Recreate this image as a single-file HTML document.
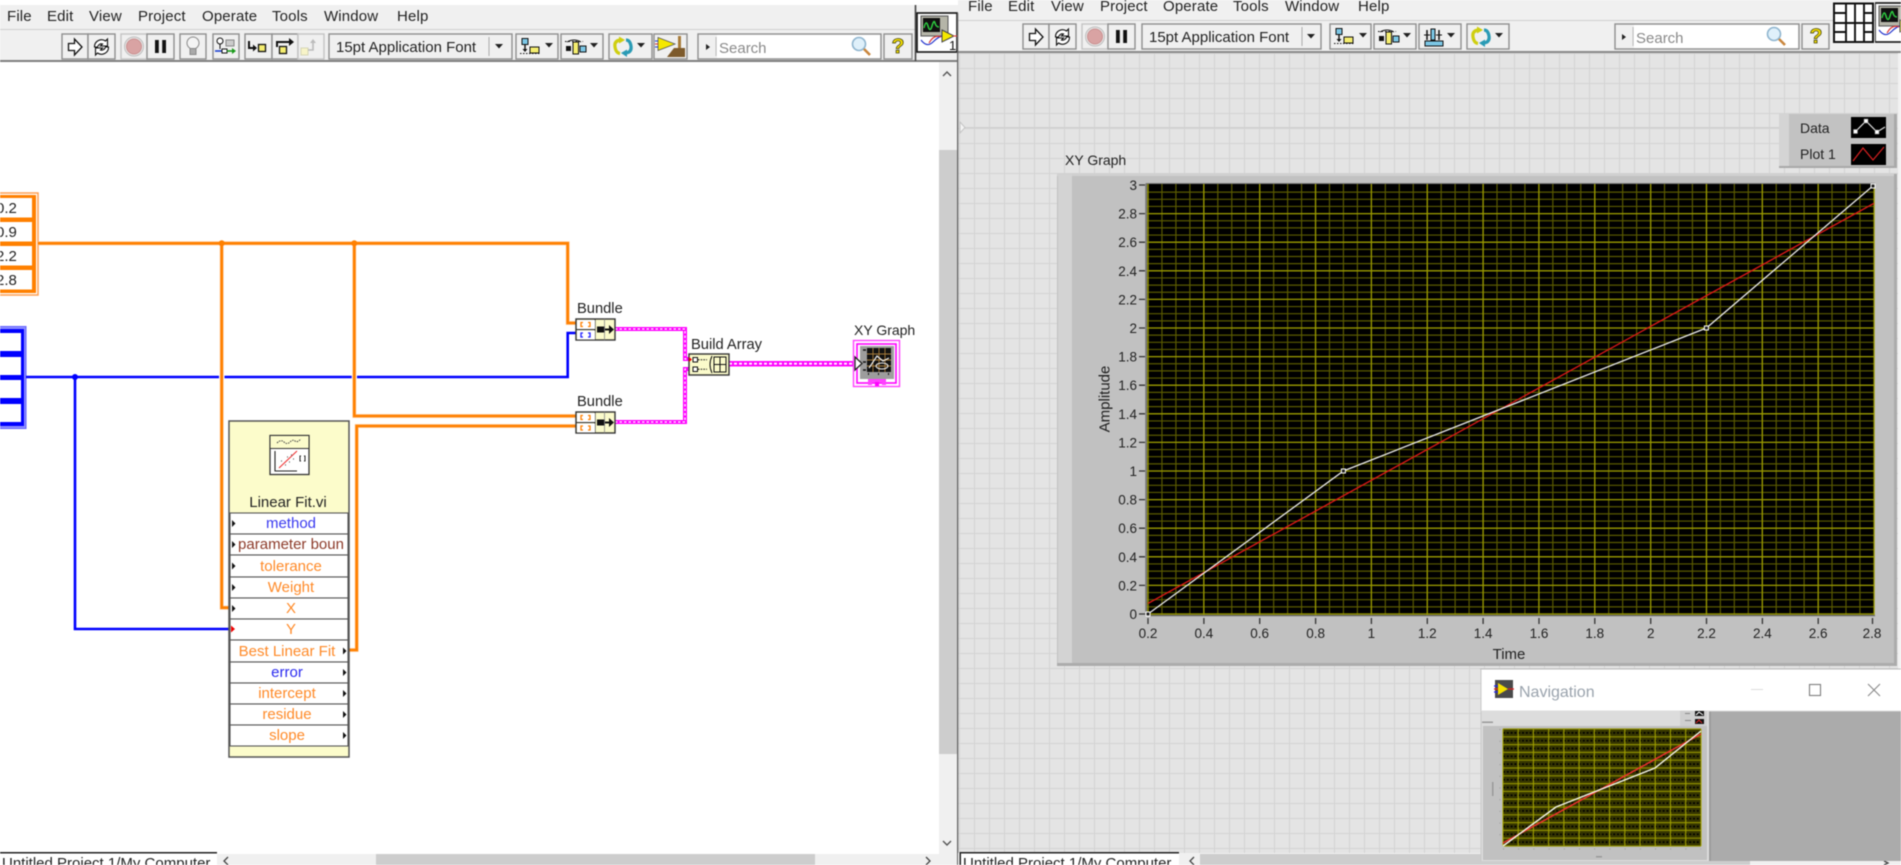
<!DOCTYPE html>
<html lang="en"><head><meta charset="utf-8"><title>LabVIEW Linear Fit</title>
<style>
html,body{margin:0;padding:0;width:1901px;height:865px;overflow:hidden;background:#fff}
svg{display:block;filter:blur(.4px)}
text{font-family:"Liberation Sans",sans-serif;fill:#222;font-size:15px}
.m{font-size:15px;letter-spacing:.15px}
.l{font-size:14.7px}
.a{font-size:13.5px;text-anchor:end}
.x{font-size:13.5px;text-anchor:middle}
.r{font-size:15px;text-anchor:middle}
.b{fill:#f0f0f0;stroke:#8f8f8f;stroke-width:1.4}
.d{fill:#f0f0f0;stroke:#c4c4c4;stroke-width:1.4}
</style></head><body>
<svg width="1901" height="865" viewBox="0 0 1901 865" xmlns="http://www.w3.org/2000/svg">
<defs>
<pattern id="fp" x="14" y="8" width="15" height="15" patternUnits="userSpaceOnUse"><rect width="15" height="15" fill="#e4e4e4"/><path d="M.5 0v15M0 .5h15" stroke="#d3d3d3" stroke-width="1"/></pattern>
<clipPath id="c1"><rect x="1875" y="0" width="26" height="50"/></clipPath>
<clipPath id="c2"><rect x="0" y="190" width="40" height="110"/></clipPath>
<g id="run"><path d="M6.5 9.5h6V5l7.5 8-7.5 8v-4.5h-6z" fill="#fff" stroke="#111" stroke-width="1.3"/></g>
<g id="cont"><g fill="#fff" stroke="#111" stroke-width="1.1"><path d="M6 13a7 7 0 0 1 11-6l2-2v7h-7l2-2a4 4 0 0 0-5 3z"/><path d="M20 13a7 7 0 0 1-11 6l-2 2v-7h7l-2 2a4 4 0 0 0 5-3z"/></g></g>
<g id="abort"><circle cx="13" cy="12.5" r="9.5" fill="#e8e8e8" stroke="#bdbdbd"/><circle cx="13" cy="12.5" r="7.5" fill="#d9a3a3" stroke="#c99090"/></g>
<g id="pause"><path d="M8 6h3.8v13H8zM15.2 6h3.8v13h-3.8z" fill="#111"/></g>
<g id="al"><rect x="6" y="4.5" width="6" height="6" fill="#7cc7e6" stroke="#111"/><path d="M9 10.5v6" stroke="#111" stroke-width="1.4"/><path d="M6.500 15l2.500 3 2.500-3z" fill="#111"/><path d="M4 19.500h20" stroke="#111" stroke-dasharray="1.500 1.500"/><rect x="14" y="13" width="9" height="6" fill="#f5ee70" stroke="#111"/><path d="M29 9h8l-4 4.500z" fill="#222"/></g>
<g id="di"><path d="M6 8q7-4 14 0" fill="none" stroke="#111"/><path d="M4 7.500h18" stroke="#111" stroke-dasharray="1.500 2"/><rect x="5" y="12" width="5" height="5" fill="#111"/><rect x="12" y="8" width="5.500" height="12" fill="#f5ee70" stroke="#111"/><rect x="19" y="12" width="6" height="6" fill="#7cc7e6" stroke="#111"/><path d="M29 9h8l-4 4.500z" fill="#222"/></g>
<g id="re"><path d="M11 6Q5 7 6 13t5 6.500" fill="none" stroke="#cfcf10" stroke-width="3.200"/><path d="M10 2.500l6 3.500-6 3.500z" fill="#cfcf10"/><path d="M17 19q6-1 5-7t-5-6" fill="none" stroke="#2a9bb5" stroke-width="3.200"/><path d="M18 23l-6-4 6-3.500z" fill="#2a9bb5"/><path d="M28 9h8l-4 4.500z" fill="#222"/></g>
<g id="vi"><rect x="0" y="0" width="40" height="39" fill="#fff" stroke="#111" stroke-width="1.600"/><rect x="4" y="3" width="27" height="20" fill="#b5b5a8" stroke="#555"/><rect x="6" y="5" width="17" height="14" fill="#111"/><path d="M7 15q2-9 4-2t4 0 3-3 4 4" fill="none" stroke="#2ecc40" stroke-width="1.500"/><path d="M4 27q6 8 12 2t10-6" fill="none" stroke="#2233cc" stroke-width="1.200"/><path d="M12 30q5-9 12-6" fill="none" stroke="#d33" stroke-width="1.200"/><path d="M25 17l12 6-12 6z" fill="#f5e800" stroke="#444"/><path d="M36 23h4" stroke="#d33"/></g>
<g id="q"><text x="14" y="19" style="font-size:21px;font-weight:bold;fill:#f2dc00;stroke:#4a4a10;stroke-width:.8" text-anchor="middle">?</text></g>
<g id="mag"><circle cx="-1" cy="-2" r="6.500" fill="#dff0fa" stroke="#8fb5cf" stroke-width="1.600"/><path d="M4 3l6 6" stroke="#c9863d" stroke-width="2.600"/></g>
<g id="tr"><path d="M0-3.500l3.500 3.500-3.500 3.500z" fill="#111"/></g>
</defs>

<!-- ============= LEFT WINDOW ============= -->
<rect width="958" height="865" fill="#fff"/>
<rect y="5" width="958" height="56" fill="#f0f0f0"/>
<rect y="29" width="915" height="1" fill="#cfcfcf"/>
<rect y="60" width="958" height="2" fill="#7f7f7f"/>
<text class="m" x="7" y="21">File</text><text class="m" x="47" y="21">Edit</text><text class="m" x="89" y="21">View</text><text class="m" x="138" y="21">Project</text><text class="m" x="202" y="21">Operate</text><text class="m" x="272" y="21">Tools</text><text class="m" x="324" y="21">Window</text><text class="m" x="397" y="21">Help</text>
<!-- left toolbar -->
<rect class="b" x="62" y="34" width="26" height="25"/><rect class="b" x="88" y="34" width="27" height="25"/>
<use href="#run" x="62" y="34"/><use href="#cont" x="88.500" y="34"/>
<rect class="d" x="121" y="34" width="26" height="25"/><rect class="b" x="147" y="34" width="27" height="25"/>
<use href="#abort" x="121" y="34"/><use href="#pause" x="147" y="34"/>
<rect class="b" x="180" y="34" width="26" height="25"/>
<g fill="#f4f4f4" stroke="#8a8a8a"><circle cx="193" cy="43" r="6"/><path d="M190 48.500h6v6h-6z" fill="#aaa"/></g>
<rect class="b" x="213" y="34" width="26" height="25"/>
<circle cx="220" cy="41" r="3" fill="#fff" stroke="#111"/><path d="M220 44v5" stroke="#111"/><rect x="226" y="40" width="8" height="6" fill="#ccc" stroke="#888"/><path d="M215 51h7" stroke="#1b3fd0" stroke-width="1.600"/><rect x="222" y="49" width="5" height="4" fill="#fff" stroke="#111"/><path d="M227 51h5" stroke="#1a9a1a" stroke-width="1.600"/><path d="M232 48l4 3-4 3z" fill="#1a9a1a"/>
<rect class="b" x="245" y="34" width="27" height="25"/><rect class="b" x="272" y="34" width="26" height="25"/><rect class="d" x="298" y="34" width="26" height="25"/>
<path d="M249 41v7h5" fill="none" stroke="#111" stroke-width="2"/><path d="M253 44.500l4 3.500-4 3.500z" fill="#111"/><rect x="258.500" y="44.500" width="7" height="7" fill="#f5ee70" stroke="#111" stroke-width="1.300"/>
<path d="M277 47v-5h13" fill="none" stroke="#111" stroke-width="2"/><path d="M289 38l5 4-5 4z" fill="#111"/><rect x="279.500" y="46.500" width="7" height="7" fill="#f5ee70" stroke="#111" stroke-width="1.300"/>
<rect x="301" y="48" width="7" height="7" fill="#f7f4c8" stroke="#d5d5b5"/><path d="M308 50h5v-8" fill="none" stroke="#bbb" stroke-width="1.600"/><path d="M310 43l3-4 3 4z" fill="#bbb"/>
<rect class="b" x="329" y="34" width="183" height="25"/><path d="M489 37v19" stroke="#aaa"/><path d="M495 44h8l-4 4.500z" fill="#222"/>
<text x="336" y="52">15pt Application Font</text>
<rect class="b" x="516" y="34" width="42" height="25"/><use href="#al" x="516" y="34"/>
<rect class="b" x="561" y="34" width="42" height="25"/><use href="#di" x="561" y="34"/>
<rect class="b" x="609" y="34" width="43" height="25"/><use href="#re" x="609" y="34"/>
<rect class="b" x="654" y="34" width="33" height="25"/>
<path d="M658 37.500l17 6.500-17 6.500z" fill="#f5e800" stroke="#555" stroke-width=".8"/><path d="M655 41h3M655 47h3" stroke="#1b3fd0"/><path d="M655 44h3" stroke="#d33"/><path d="M679.500 36v12" stroke="#a87b3a" stroke-width="3"/><path d="M667 57l7-9h11v9z" fill="#7d5a2b"/>
<rect class="b" x="698" y="34" width="183" height="25"/><rect x="717" y="35" width="163" height="23" fill="#fff"/><path d="M706 44l4 3-4 3z" fill="#222"/><path d="M716 37v19" stroke="#bbb"/>
<text x="719" y="53" style="fill:#8a8a8a;font-size:15px">Search</text><use href="#mag" x="860" y="46"/>
<rect class="b" x="884" y="34" width="28" height="25"/><use href="#q" x="884" y="34"/>
<!-- left VI icon -->
<path d="M915.500 5v56" stroke="#444" stroke-width="1.600"/>
<use href="#vi" x="917" y="13"/><text x="949" y="50" style="font-size:13px;fill:#111">1</text>

<!-- left scrollbars -->
<rect x="939" y="62" width="18" height="792" fill="#f0f0f0"/>
<rect x="939" y="150" width="18" height="604" fill="#cdcdcd"/>
<path d="M943 76l4-4 4 4M943 841l4 4 4-4" fill="none" stroke="#555" stroke-width="1.400"/>
<rect x="0" y="854" width="958" height="11" fill="#f0f0f0"/>
<rect x="376" y="854" width="439" height="11" fill="#cdcdcd"/>
<rect x="0" y="852" width="217" height="1.500" fill="#222"/>
<rect x="0" y="853.500" width="217" height="11.500" fill="#fff"/>
<text x="2" y="868" style="font-size:15px">Untitled Project 1/My Computer</text>
<path d="M228 857l-4 4 4 4M926 857l4 4-4 4" fill="none" stroke="#444" stroke-width="1.300"/>

<!-- block diagram: numeric arrays -->
<g clip-path="url(#c2)">
<rect x="-8" y="193" width="46" height="102" fill="#fff" stroke="#ff9f50" stroke-width="1.500"/>
<rect x="-8" y="195" width="44" height="98" fill="#ff8000"/>
<rect x="-4" y="198" width="36" height="19.500" fill="#fff"/><rect x="-4" y="222" width="36" height="19.500" fill="#fff"/><rect x="-4" y="246" width="36" height="19.500" fill="#fff"/><rect x="-4" y="270" width="36" height="19.500" fill="#fff"/>
<text x="-4" y="213">0.2</text><text x="-4" y="237">0.9</text><text x="-4" y="261">2.2</text><text x="-4" y="285">2.8</text>
</g>
<rect x="-8" y="326.500" width="34" height="102" fill="#8f8fff" stroke="#6060ff"/>
<rect x="-8" y="329" width="32" height="97" fill="#0000ff"/>
<rect x="-4" y="333" width="25" height="18" fill="#fff"/><rect x="-4" y="357" width="25" height="18" fill="#fff"/><rect x="-4" y="380" width="25" height="18" fill="#fff"/><rect x="-4" y="404" width="25" height="18" fill="#fff"/>

<!-- wires blue -->
<g fill="none" stroke="#0000ff" stroke-width="2.600">
<path d="M26 377H219M224.500 377H351.700M357 377H567.700V333H576"/>
<path d="M75 377V629H230"/>
</g>
<circle cx="75" cy="377" r="3" fill="#0000ff"/>
<!-- wires orange -->
<g fill="none" stroke="#ffc28a" stroke-width="3.800"><path d="M38 243.300H567.700V323H576M221.700 243V607.700H230M354.300 243V416H576M348 650H356.700V426H576"/></g>
<g fill="none" stroke="#ff8000" stroke-width="2.600"><path d="M38 243.300H567.700V323H576M221.700 243V607.700H230M354.300 243V416H576M348 650H356.700V426H576"/></g>
<circle cx="221.700" cy="243.300" r="3" fill="#ff8000"/><circle cx="354.300" cy="243.300" r="3" fill="#ff8000"/>

<!-- cluster wires -->
<g fill="none" stroke="#ff00ff" stroke-width="4"><path d="M615 329H685V359H690M615 422H685V369H690"/></g>
<g fill="none" stroke="#fff" stroke-width="1.300" stroke-dasharray="2.500 2"><path d="M615 329H685V359H690M615 422H685V369H690"/></g>
<path d="M729 363.700H855" stroke="#ff00ff" stroke-width="5.500"/>
<path d="M729 363.700H855" stroke="#fff" stroke-width="1.800" stroke-dasharray="3 2"/>

<!-- bundles -->
<rect x="576" y="319" width="39" height="21" fill="#fbfbcb" stroke="#333" stroke-width="1.400"/>
<path d="M595 319v21M576 329.500h19" stroke="#333" stroke-width="1.200"/>
<rect x="577" y="320" width="18" height="9" fill="#fff"/><rect x="577" y="330.500" width="18" height="9" fill="#fff"/>
<rect x="597" y="326.500" width="8" height="6" fill="#111"/><path d="M603 329.500h8" stroke="#111" stroke-width="2"/><path d="M609 325l5 4.500-5 4.500z" fill="#111"/><path d="M604.500 319v21" stroke="#888" stroke-width=".8"/>
<g fill="none" stroke="#ff8000" stroke-width="1.300"><path d="M583 322.500h-2v4h2M588 322.500h2v4h-2"/></g>
<g fill="none" stroke="#2020ff" stroke-width="1.300"><path d="M583 333h-2v4h2M588 333h2v4h-2"/></g>
<rect x="576" y="412" width="39" height="21" fill="#fbfbcb" stroke="#333" stroke-width="1.400"/>
<path d="M595 412v21M576 422.500h19" stroke="#333" stroke-width="1.200"/>
<rect x="577" y="413" width="18" height="9" fill="#fff"/><rect x="577" y="423.500" width="18" height="9" fill="#fff"/>
<rect x="597" y="419.500" width="8" height="6" fill="#111"/><path d="M603 422.500h8" stroke="#111" stroke-width="2"/><path d="M609 418l5 4.500-5 4.500z" fill="#111"/><path d="M604.500 412v21" stroke="#888" stroke-width=".8"/>
<g fill="none" stroke="#ff8000" stroke-width="1.300"><path d="M583 415.500h-2v4h2M588 415.500h2v4h-2M583 426h-2v4h2M588 426h2v4h-2"/></g>
<text class="l" x="577" y="313">Bundle</text>
<text class="l" x="577" y="406">Bundle</text>

<!-- build array -->
<rect x="689" y="354" width="40" height="21" fill="#fbfbcb" stroke="#333" stroke-width="1.400"/>
<rect x="693" y="357.500" width="4.500" height="4.500" fill="#fff" stroke="#111"/><rect x="693" y="367" width="4.500" height="4.500" fill="#fff" stroke="#111"/>
<path d="M698 359.700h9M698 369.200h9" stroke="#111" stroke-dasharray="1.500 1.200"/>
<path d="M712 356q-4 8.500 0 17" fill="none" stroke="#111"/><rect x="714" y="357" width="12" height="15" fill="#fbfbcb" stroke="#111"/><path d="M720 357v15M714 364.500h12" stroke="#111"/>
<path d="M689 357l3 2.500-3 2.500z" fill="#e00"/>
<text class="l" x="691" y="349">Build Array</text>

<!-- XY Graph terminal -->
<rect x="853.500" y="340.500" width="46" height="46" fill="#fff" stroke="#ff40ff" stroke-width="1.400"/>
<rect x="857" y="344" width="39" height="39" fill="#fff" stroke="#ff00ff" stroke-width="1.600"/>
<rect x="860" y="346" width="34" height="33" fill="#9d9d9d"/>
<rect x="867" y="348" width="24" height="24" fill="#111"/>
<path d="M867 354h24M867 360h24M867 366h24M873 348v24M879 348v24M885 348v24" stroke="#a87d3a" stroke-width=".9"/>
<path d="M869 368l8-12 6 5 6-3" fill="none" stroke="#eee" stroke-width="1.200"/><ellipse cx="882" cy="366" rx="6" ry="3" fill="none" stroke="#eee"/>
<path d="M866 350h-3M866 362h-3M866 370h-3" stroke="#111" stroke-width="1.500"/><path d="M868 374h1M878 374h1M888 374h1" stroke="#111" stroke-width="2"/>
<path d="M855 357l7 6.500-7 6.500z" fill="#fff" stroke="#222" stroke-width="1.300"/>
<path d="M868 379h18v6h-4v-3h-10v3h-4z" fill="#ff40ff"/>
<rect x="875" y="382" width="4" height="4" fill="#ff00ff"/>
<text style="font-size:14px" x="854" y="335">XY Graph</text>

<!-- Linear Fit subVI -->
<rect x="229" y="421" width="120" height="336" fill="#fcfccb" stroke="#555" stroke-width="1.500"/>
<rect x="270" y="435.500" width="39" height="39" fill="#fff" stroke="#333" stroke-width="1.300"/>
<rect x="270.500" y="436" width="38" height="12" fill="#fcfccb"/><path d="M270 448.500h39" stroke="#333"/>
<path d="M277 443q4-4 7-1t6 0 5-1 6-2" fill="none" stroke="#444" stroke-width="1" stroke-dasharray="1.500 1"/>
<path d="M275 451v20h22" fill="none" stroke="#222" stroke-width="1.100"/><path d="M279 468l18-17" stroke="#e33" stroke-width="1.100"/>
<path d="M281 461h1M285 465h1M287 457h1M291 455h1M293 459h1M289 462h1" stroke="#666" stroke-width="1.300"/>
<path d="M301 456h-1v5h1M304 456h1v5h-1" fill="none" stroke="#222"/>
<text class="r" x="288" y="507">Linear Fit.vi</text>
<g fill="#fff" stroke="#555" stroke-width="1.100">
<rect x="230" y="513" width="118" height="21"/><rect x="230" y="534" width="118" height="21"/><rect x="230" y="555" width="118" height="22"/><rect x="230" y="577" width="118" height="21"/><rect x="230" y="598" width="118" height="21"/><rect x="230" y="619" width="118" height="21"/><rect x="230" y="640" width="118" height="22"/><rect x="230" y="662" width="118" height="21"/><rect x="230" y="683" width="118" height="21"/><rect x="230" y="704" width="118" height="21"/><rect x="230" y="725" width="118" height="21"/>
</g>
<text class="r" x="291" y="528" style="fill:#3a3af0">method</text>
<text class="r" x="291" y="549" style="fill:#8d3b2a">parameter boun</text>
<text class="r" x="291" y="571" style="fill:#ff8a28">tolerance</text>
<text class="r" x="291" y="592" style="fill:#ff8a28">Weight</text>
<text class="r" x="291" y="613" style="fill:#ff8a28">X</text>
<text class="r" x="291" y="634" style="fill:#ff8a28">Y</text>
<text class="r" x="287" y="656" style="fill:#ff8a28">Best Linear Fit</text>
<text class="r" x="287" y="677" style="fill:#2a2af0">error</text>
<text class="r" x="287" y="698" style="fill:#ff8a28">intercept</text>
<text class="r" x="287" y="719" style="fill:#ff8a28">residue</text>
<text class="r" x="287" y="740" style="fill:#ff8a28">slope</text>
<use href="#tr" x="232" y="523.500"/><use href="#tr" x="232" y="544.500"/><use href="#tr" x="232" y="566"/><use href="#tr" x="232" y="587.500"/><use href="#tr" x="232" y="608.500"/>
<path d="M231 625.500l4 3.500-4 3.500z" fill="#e00"/>
<use href="#tr" x="343" y="651"/><use href="#tr" x="343" y="672.500"/><use href="#tr" x="343" y="693.500"/><use href="#tr" x="343" y="714.500"/><use href="#tr" x="343" y="735.500"/>

<!-- ============= RIGHT WINDOW ============= -->
<rect x="958" y="0" width="943" height="53" fill="#f0f0f0"/>
<rect x="958" y="20" width="943" height="1" fill="#d0d0d0"/>
<rect x="958" y="51" width="943" height="2" fill="#8a8a8a"/>
<rect x="958" y="53" width="943" height="800" fill="url(#fp)"/>
<rect x="957" y="13" width="1.300" height="852" fill="#666"/>
<rect x="1898" y="53" width="3" height="800" fill="#f2f2f2"/>
<text class="m" x="968" y="11">File</text><text class="m" x="1008" y="11">Edit</text><text class="m" x="1051" y="11">View</text><text class="m" x="1100" y="11">Project</text><text class="m" x="1163" y="11">Operate</text><text class="m" x="1233" y="11">Tools</text><text class="m" x="1285" y="11">Window</text><text class="m" x="1358" y="11">Help</text>
<rect class="b" x="1023" y="24" width="26" height="25"/><rect class="b" x="1049" y="24" width="27" height="25"/>
<use href="#run" x="1023" y="24"/><use href="#cont" x="1049.500" y="24"/>
<rect class="d" x="1082" y="24" width="26" height="25"/><rect class="b" x="1108" y="24" width="27" height="25"/>
<use href="#abort" x="1082" y="24"/><use href="#pause" x="1108" y="24"/>
<rect class="b" x="1142" y="24" width="179" height="25"/><path d="M1302 27v19" stroke="#aaa"/><path d="M1307 34h8l-4 4.500z" fill="#222"/>
<text x="1149" y="42">15pt Application Font</text>
<rect class="b" x="1330" y="24" width="41" height="25"/><use href="#al" x="1330" y="24"/>
<rect class="b" x="1374" y="24" width="42" height="25"/><use href="#di" x="1374" y="24"/>
<rect class="b" x="1419" y="24" width="42" height="25"/>
<path d="M1427 30v10M1439 30v10" stroke="#111" stroke-width="1.500"/><path d="M1424 35h6M1442 35h-6" stroke="#111"/><rect x="1431" y="29" width="4" height="11" fill="#7cc7e6" stroke="#111"/><rect x="1425" y="41" width="18" height="5" fill="#7cc7e6" stroke="#111"/><path d="M1447 33h8l-4 4.500z" fill="#222"/>
<rect class="b" x="1467" y="24" width="42" height="25"/><use href="#re" x="1467" y="24"/>
<rect class="b" x="1615" y="24" width="184" height="25"/><rect x="1634" y="25" width="164" height="23" fill="#fff"/><path d="M1622 34l4 3-4 3z" fill="#222"/><path d="M1633 27v19" stroke="#bbb"/>
<text x="1636" y="43" style="fill:#8a8a8a;font-size:15px">Search</text><use href="#mag" x="1775" y="36"/>
<rect class="b" x="1802" y="24" width="27" height="25"/><use href="#q" x="1802" y="24"/>
<!-- connector pane -->
<rect x="1834" y="3.500" width="39" height="38.500" fill="#fff" stroke="#111" stroke-width="2"/>
<path d="M1846 3v39M1855 3v39M1864 3v39M1834 13h12M1834 23h39M1834 32h12M1864 13h9M1864 32h9" stroke="#111" stroke-width="1.900" fill="none"/>
<g clip-path="url(#c1)"><use href="#vi" x="1875" y="3"/></g>

<!-- splitter -->
<path d="M962 127.500H1779" stroke="#cfcfcf" stroke-width="1"/><path d="M960 122l5 5.500-5 5.500z" fill="#f4f4f4" stroke="#c4c4c4"/>

<!-- legend -->
<rect x="1779" y="114" width="118" height="54" fill="#c2c2c2"/><rect x="1779" y="114" width="10" height="54" fill="#d4d4d4"/><rect x="1779" y="166" width="118" height="2" fill="#a8a8a8"/><rect x="1894" y="114" width="3" height="54" fill="#a9a9a9"/>
<text x="1800" y="133" style="font-size:14px">Data</text><text x="1800" y="159" style="font-size:14px">Plot 1</text>
<rect x="1851" y="117" width="35" height="21" fill="#000"/><rect x="1851" y="144" width="35" height="21" fill="#000"/>
<path d="M1855 132l11-11 11 11 8-5" fill="none" stroke="#ddd" stroke-width="1.200"/><rect x="1853.500" y="129.500" width="4" height="4" fill="#fff" stroke="#888" stroke-width=".5"/><rect x="1864" y="119" width="4" height="4" fill="#fff" stroke="#888" stroke-width=".5"/><rect x="1875" y="130" width="4" height="4" fill="#fff" stroke="#888" stroke-width=".5"/>
<path d="M1853 161l10-13 10 12 11-13" fill="none" stroke="#d82020" stroke-width="1.200"/>

<!-- XY graph -->
<text x="1065" y="165" style="font-size:14px">XY Graph</text>
<rect x="1057" y="173" width="840" height="493" fill="#c1c1c1"/>
<rect x="1057" y="173" width="840" height="3" fill="#d0d0d0"/>
<rect x="1058" y="174" width="14" height="491" fill="#d3d3d3"/>
<rect x="1057" y="663" width="840" height="3" fill="#acacac"/><rect x="1894" y="174" width="3" height="492" fill="#ababab"/>
<rect x="1147" y="184" width="727" height="431" fill="#000"/>
<path d="M1146 183.500V615.500H1875" fill="none" stroke="#6e6e6e" stroke-width="1.400"/><path d="M1146 183.500H1875" stroke="#7a7a7a"/>
<!-- grid minor -->
<path stroke="#5a5a00" stroke-width="1.200" fill="none" d="M1148 184v431m13.960-431v431m13.960-431v431m13.960-431v431m13.960-431v431m13.960-431v431m13.960-431v431m13.960-431v431m13.960-431v431m13.960-431v431m13.960-431v431m13.960-431v431m13.960-431v431m13.960-431v431m13.960-431v431m13.960-431v431m13.960-431v431m13.960-431v431m13.960-431v431m13.960-431v431m13.960-431v431m13.960-431v431m13.960-431v431m13.960-431v431m13.960-431v431m13.960-431v431m13.960-431v431m13.960-431v431m13.960-431v431m13.960-431v431m13.960-431v431m13.960-431v431m13.960-431v431m13.960-431v431m13.960-431v431m13.960-431v431m13.960-431v431m13.960-431v431m13.960-431v431m13.960-431v431m13.960-431v431m13.960-431v431m13.960-431v431m13.960-431v431m13.960-431v431m13.960-431v431m13.960-431v431m13.960-431v431m13.960-431v431m13.960-431v431m13.960-431v431m13.960-431v431"/>
<path stroke="#5a5a00" stroke-width="1.200" fill="none" d="M1147 614h727m-727-7.150h727m-727-7.150h727m-727-7.150h727m-727-7.150h727m-727-7.150h727m-727-7.150h727m-727-7.150h727m-727-7.150h727m-727-7.150h727m-727-7.150h727m-727-7.150h727m-727-7.150h727m-727-7.150h727m-727-7.150h727m-727-7.150h727m-727-7.150h727m-727-7.150h727m-727-7.150h727m-727-7.150h727m-727-7.150h727m-727-7.150h727m-727-7.150h727m-727-7.150h727m-727-7.150h727m-727-7.150h727m-727-7.150h727m-727-7.150h727m-727-7.150h727m-727-7.150h727m-727-7.150h727m-727-7.150h727m-727-7.150h727m-727-7.150h727m-727-7.150h727m-727-7.150h727m-727-7.150h727m-727-7.150h727m-727-7.150h727m-727-7.150h727m-727-7.150h727m-727-7.150h727m-727-7.150h727m-727-7.150h727m-727-7.150h727m-727-7.150h727m-727-7.150h727m-727-7.150h727m-727-7.150h727m-727-7.150h727m-727-7.150h727m-727-7.150h727m-727-7.150h727m-727-7.150h727m-727-7.150h727m-727-7.150h727m-727-7.150h727m-727-7.150h727m-727-7.150h727m-727-7.150h727"/>
<!-- grid major -->
<path stroke="#989800" stroke-width="1.300" fill="none" d="M1148 184v431m55.850-431v431m55.850-431v431m55.850-431v431m55.850-431v431m55.850-431v431m55.850-431v431m55.850-431v431m55.850-431v431m55.850-431v431m55.850-431v431m55.850-431v431m55.850-431v431m55.850-431v431"/>
<path stroke="#989800" stroke-width="1.300" fill="none" d="M1147 614h727m-727-28.600h727m-727-28.600h727m-727-28.600h727m-727-28.600h727m-727-28.600h727m-727-28.600h727m-727-28.600h727m-727-28.600h727m-727-28.600h727m-727-28.600h727m-727-28.600h727m-727-28.600h727m-727-28.600h727m-727-28.600h727"/>
<!-- plots -->
<path d="M1148 603.400L1874 203.300" stroke="#e01818" stroke-width="1.300" fill="none"/>
<path d="M1148 614L1343.400 471 1706.400 328 1874 185" stroke="#e8e8e8" stroke-width="1.300" fill="none"/>
<g fill="#222" stroke="#fff" stroke-width="1"><rect x="1146" y="612" width="4" height="4"/><rect x="1341.400" y="469" width="4" height="4"/><rect x="1704.400" y="326" width="4" height="4"/><rect x="1871" y="184" width="4" height="4"/></g>
<!-- ticks -->
<path stroke="#333" stroke-width="1.300" d="M1139 185h6M1139 213.600h6M1139 242.200h6M1139 270.800h6M1139 299.400h6M1139 328h6M1139 356.600h6M1139 385.200h6M1139 413.800h6M1139 442.400h6M1139 471h6M1139 499.600h6M1139 528.200h6M1139 556.800h6M1139 585.400h6M1139 614h6M1148 618v6M1203.900 618v6M1259.700 618v6M1315.600 618v6M1371.400 618v6M1427.300 618v6M1483.100 618v6M1539 618v6M1594.800 618v6M1650.700 618v6M1706.500 618v6M1762.400 618v6M1818.200 618v6M1872.500 618v6"/>
<text class="a" x="1137" y="190">3</text><text class="a" x="1137" y="218.600">2.8</text><text class="a" x="1137" y="247.200">2.6</text><text class="a" x="1137" y="275.800">2.4</text><text class="a" x="1137" y="304.400">2.2</text><text class="a" x="1137" y="333">2</text><text class="a" x="1137" y="361.600">1.8</text><text class="a" x="1137" y="390.200">1.6</text><text class="a" x="1137" y="418.800">1.4</text><text class="a" x="1137" y="447.400">1.2</text><text class="a" x="1137" y="476">1</text><text class="a" x="1137" y="504.600">0.8</text><text class="a" x="1137" y="533.200">0.6</text><text class="a" x="1137" y="561.800">0.4</text><text class="a" x="1137" y="590.400">0.2</text><text class="a" x="1137" y="619">0</text>
<text class="x" x="1148" y="638">0.2</text><text class="x" x="1203.900" y="638">0.4</text><text class="x" x="1259.700" y="638">0.6</text><text class="x" x="1315.600" y="638">0.8</text><text class="x" x="1371.400" y="638">1</text><text class="x" x="1427.300" y="638">1.2</text><text class="x" x="1483.100" y="638">1.4</text><text class="x" x="1539" y="638">1.6</text><text class="x" x="1594.800" y="638">1.8</text><text class="x" x="1650.700" y="638">2</text><text class="x" x="1706.500" y="638">2.2</text><text class="x" x="1762.400" y="638">2.4</text><text class="x" x="1818.200" y="638">2.6</text><text class="x" x="1872" y="638">2.8</text>
<text x="1509" y="659" text-anchor="middle" style="font-size:15px">Time</text>
<text transform="translate(1109.500 399) rotate(-90)" text-anchor="middle" style="font-size:15px">Amplitude</text>

<!-- right bottom bars -->
<rect x="958" y="853" width="943" height="12" fill="#f0f0f0"/>
<rect x="960" y="852" width="219" height="1.500" fill="#222"/><rect x="960" y="853.500" width="219" height="11.500" fill="#fff"/><rect x="959.500" y="852" width="1.500" height="13" fill="#222"/>
<text x="963" y="868" style="font-size:15px">Untitled Project 1/My Computer</text>
<path d="M1194 857l-4 4 4 4" fill="none" stroke="#444" stroke-width="1.300"/>
<rect x="1200" y="854" width="550" height="11" fill="#cdcdcd"/>
<path d="M1884 861l4 2-4 2" fill="none" stroke="#444" stroke-width="1.300"/>

<!-- Navigation window -->
<rect x="1481" y="669" width="420" height="192" fill="#ababab"/>
<rect x="1481" y="669" width="420" height="42" fill="#fff"/>
<rect x="1481" y="711" width="229" height="150" fill="#dcdcdc"/>
<rect x="1480" y="668.500" width="421" height="1" fill="#bbb"/><rect x="1480.500" y="669" width="1" height="192" fill="#c8c8c8"/>
<rect x="1709" y="711" width="2" height="150" fill="#9c9c9c"/>
<rect x="1481" y="710.500" width="420" height="1" fill="#dcdcdc"/>
<rect x="1495" y="680" width="18" height="18" fill="#4a4a4a"/><path d="M1498 683l10 6-10 6z" fill="#f5e000"/><path d="M1494 686h4M1494 692h4" stroke="#2222ee" stroke-width="1.200"/><path d="M1494 689h4M1508 689h6" stroke="#e02020" stroke-width="1.200"/>
<text x="1519" y="697" style="font-size:16px;fill:#9aa3ad">Navigation</text>
<path d="M1751 689.500h12" stroke="#dcdcdc"/>
<rect x="1809.500" y="684.500" width="11" height="11" fill="none" stroke="#7d7d7d" stroke-width="1.100"/>
<path d="M1868 684l12 12M1880 684l-12 12" stroke="#8a8a8a" stroke-width="1.100"/>
<!-- mini panel -->
<rect x="1680" y="711" width="27" height="15" fill="#cfcfcf"/>
<rect x="1695" y="711" width="9" height="5" fill="#111"/><path d="M1696 715l3-3 4 3" stroke="#fff" fill="none"/><rect x="1695" y="719" width="9" height="5" fill="#111"/><path d="M1696 723l3-3 3 3" stroke="#d22" fill="none"/>
<rect x="1685" y="713" width="5" height="1" fill="#888"/><rect x="1685" y="720" width="6" height="1" fill="#888"/><rect x="1482" y="721.500" width="11" height="1.500" fill="#999"/>
<rect x="1483" y="726" width="224" height="134" fill="#c1c1c1"/>
<rect x="1503" y="729" width="198" height="117" fill="#353500"/>
<path stroke="#000" stroke-width="1.700" stroke-dasharray="2 1.800" fill="none" d="M1503 842.100h198m-198-7.800h198m-198-7.800h198m-198-7.800h198m-198-7.800h198m-198-7.800h198m-198-7.800h198m-198-7.800h198m-198-7.800h198m-198-7.800h198m-198-7.800h198m-198-7.800h198m-198-7.800h198m-198-7.800h198m-198-7.800h198"/>
<path stroke="#8e8e00" stroke-width="1.200" fill="none" d="M1503 846h198m-198-7.800h198m-198-7.800h198m-198-7.800h198m-198-7.800h198m-198-7.800h198m-198-7.800h198m-198-7.800h198m-198-7.800h198m-198-7.800h198m-198-7.800h198m-198-7.800h198m-198-7.800h198m-198-7.800h198m-198-7.800h198m-198-7.800h198"/>
<path stroke="#a0a000" stroke-width="1.100" fill="none" d="M1503 729v117m15.230-117v117m15.230-117v117m15.230-117v117m15.230-117v117m15.230-117v117m15.230-117v117m15.230-117v117m15.230-117v117m15.230-117v117m15.230-117v117m15.230-117v117m15.230-117v117m15.230-117v117"/>
<path d="M1503 843L1701 734" stroke="#f03030" stroke-width="1.400" fill="none"/>
<path d="M1503 846L1556 807 1655 768 1701 731" stroke="#f4f4ea" stroke-width="1.400" fill="none"/>
<path stroke="#999" stroke-width="1" stroke-dasharray="1 10.700" d="M1500 729v117"/>
<path stroke="#999" stroke-width="1" stroke-dasharray="1 14.200" d="M1503 849h198"/>
<rect x="1492" y="782" width="1.500" height="14" fill="#999"/><rect x="1596" y="856" width="6" height="1.500" fill="#999"/>
</svg>
</body></html>
